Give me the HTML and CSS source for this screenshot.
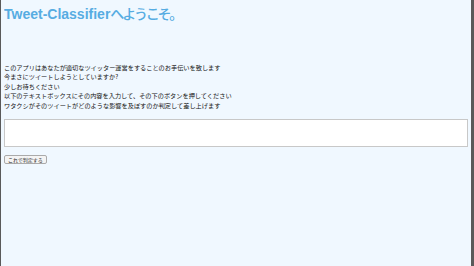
FILE: index.html
```html
<!DOCTYPE html>
<html lang="ja">
<head>
    <meta charset="UTF-8">
    <meta name="viewport" content="width=device-width, initial-scale=1.0">
    <title>Tweet-Classifier</title>
    <link rel="stylesheet" href="styles.css">
</head>
<body>
    <h1 class="title">Tweet-Classifier<span class="title-ja">へようこそ。</span></h1>

    <div class="intro">
        <p>このアプリはあなたが適切なツイッター運営をすることのお手伝いを致します</p>
        <p>今まさにツイートしようとしていますか?</p>
        <p>少しお待ちください</p>
        <p>以下のテキストボックスにその内容を入力して、その下のボタンを押してください</p>
        <p>ワタクシがそのツイートがどのような影響を及ぼすのか判定して差し上げます</p>
    </div>

    <form class="tweet-form">
        <textarea class="tweet-box"></textarea>
        <button type="button" class="judge">これで判定する</button>
    </form>
</body>
</html>
```

FILE: styles.css
```css
html {
    background: #f0f8ff;
    border-left: 1px solid #5a5a5a;
    border-right: 3px solid #5a5a5a;
    height: 100%;
    box-sizing: border-box;
}

body {
    margin: 0 3px;
    font-family: 'Noto Sans CJK JP', 'Liberation Sans', sans-serif;
    color: #111;
}

.title {
    margin: 0;
    padding-top: 4px;
    font-family: 'Liberation Sans', 'Noto Sans CJK JP', sans-serif;
    font-size: 14px;
    font-weight: bold;
    color: #56ace2;
    line-height: 18px;
}

.title-ja {
    font-family: 'Noto Sans CJK JP', sans-serif;
    font-weight: 500;
    letter-spacing: -2.2px;
}

.intro {
    margin-top: 40px;
    font-size: 6.2px;
}

.intro p {
    margin: 0;
    line-height: 9.4px;
}

.tweet-form {
    margin-top: 9px;
}

.tweet-box {
    display: block;
    width: 100%;
    height: 28px;
    box-sizing: border-box;
    border: 1px solid #c8c8c8;
    background: #fff;
    resize: none;
}

.judge {
    display: block;
    margin-top: 8px;
    font-family: 'Noto Sans CJK JP', sans-serif;
    font-size: 5px;
    line-height: 7px;
    padding: 0 3px;
    border: 1px solid #aaa;
    border-radius: 2px;
    background: #f4f4f4;
    color: #222;
}
```
